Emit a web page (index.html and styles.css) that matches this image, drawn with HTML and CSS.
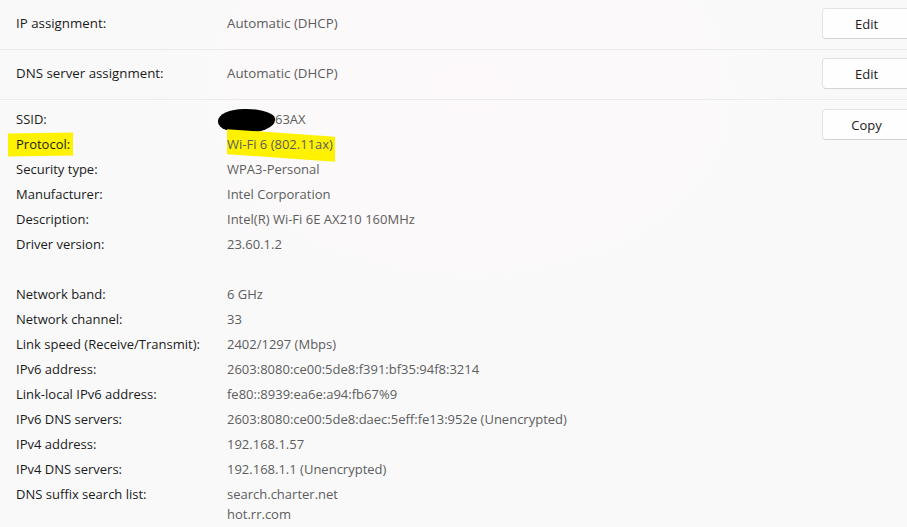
FILE: index.html
```html
<!DOCTYPE html>
<html lang="en">
<head>
<meta charset="utf-8">
<title>Wi-Fi properties</title>
<link rel="stylesheet" href="styles.css">
</head>
<body>
<main class="page">
  <section class="row">
    <div class="label">IP assignment:</div>
    <div class="value">Automatic (DHCP)</div>
    <button class="btn">Edit</button>
  </section>
  <section class="row">
    <div class="label">DNS server assignment:</div>
    <div class="value">Automatic (DHCP)</div>
    <button class="btn">Edit</button>
  </section>
  <section class="details">
    <dl class="props">
      <dt>SSID:</dt>
      <dd><span class="redact"></span>63AX</dd>
      <dt><span class="mark mark-label">Protocol:</span></dt>
      <dd><span class="mark mark-value">Wi-Fi 6 (802.11ax)</span></dd>
      <dt>Security type:</dt>
      <dd>WPA3-Personal</dd>
      <dt>Manufacturer:</dt>
      <dd>Intel Corporation</dd>
      <dt>Description:</dt>
      <dd>Intel(R) Wi-Fi 6E AX210 160MHz</dd>
      <dt>Driver version:</dt>
      <dd>23.60.1.2</dd>
      <dt class="gap"></dt>
      <dd class="gap"></dd>
      <dt>Network band:</dt>
      <dd>6 GHz</dd>
      <dt>Network channel:</dt>
      <dd>33</dd>
      <dt>Link speed (Receive/Transmit):</dt>
      <dd>2402/1297 (Mbps)</dd>
      <dt>IPv6 address:</dt>
      <dd>2603:8080:ce00:5de8:f391:bf35:94f8:3214</dd>
      <dt>Link-local IPv6 address:</dt>
      <dd>fe80::8939:ea6e:a94:fb67%9</dd>
      <dt>IPv6 DNS servers:</dt>
      <dd>2603:8080:ce00:5de8:daec:5eff:fe13:952e (Unencrypted)</dd>
      <dt>IPv4 address:</dt>
      <dd>192.168.1.57</dd>
      <dt>IPv4 DNS servers:</dt>
      <dd>192.168.1.1 (Unencrypted)</dd>
      <dt>DNS suffix search list:</dt>
      <dd>search.charter.net<br>hot.rr.com</dd>
    </dl>
    <button class="btn">Copy</button>
  </section>
</main>
</body>
</html>
```
FILE: styles.css
```css
html, body {
  margin: 0;
  padding: 0;
}
body {
  width: 907px;
  height: 527px;
  overflow: hidden;
  background: radial-gradient(ellipse 420px 300px at 470px 90px, #fdf9fa 0%, rgba(253,249,250,0) 100%), #f9f9fa;
  font-family: "Open Sans", "Noto Sans", sans-serif;
  font-size: 13px;
  color: #1b1b1b;
}
.page {
  display: flex;
  flex-direction: column;
}
.row {
  display: flex;
  align-items: center;
  height: 49px;
  border-bottom: 1px solid #ececec;
  padding-left: 16px;
}
.row .label,
.row .value {
  padding-bottom: 4px;
}
.row .value {
  flex: 1;
  font-size: 13.3px;
}
.row .label {
  font-size: 13.3px;
}
.row .btn {
  margin-bottom: 2px;
}
.label, dt {
  width: 211px;
  flex: none;
}
.value, dd {
  color: #5d5d5d;
}
.btn {
  flex: none;
  width: 89px;
  height: 31px;
  margin-right: -4px;
  border: 1px solid #e3e3e3;
  border-bottom-color: #d3d3d3;
  border-radius: 4px;
  background: #fefefe;
  font: inherit;
  color: #1b1b1b;
  padding: 0;
}
.details {
  display: flex;
  align-items: flex-start;
  padding: 9px 0 0 16px;
}
.props {
  flex: 1;
  margin: 0;
  display: grid;
  grid-template-columns: 211px 1fr;
  row-gap: 5px;
  line-height: 20px;
}
dt, dd {
  margin: 0;
}
.gap {
  height: 20px;
}
.redact {
  display: inline-block;
  vertical-align: middle;
  width: 57px;
  height: 24px;
  margin: -4px 0 -4px -9px;
  background: #000;
  border-radius: 50% 55% 60% 50% / 55% 45% 60% 50%;
}
.mark {
  position: relative;
  z-index: 0;
}
.mark::before {
  content: "";
  position: absolute;
  z-index: -1;
  background: #fff200;
}
.mark-label::before {
  left: -8px;
  right: -3px;
  top: -2px;
  bottom: -3px;
  transform: skewY(-1deg);
}
.mark-value::before {
  left: 0;
  right: -2px;
  top: -2px;
  bottom: -5px;
  transform: skewY(4deg);
}
```
